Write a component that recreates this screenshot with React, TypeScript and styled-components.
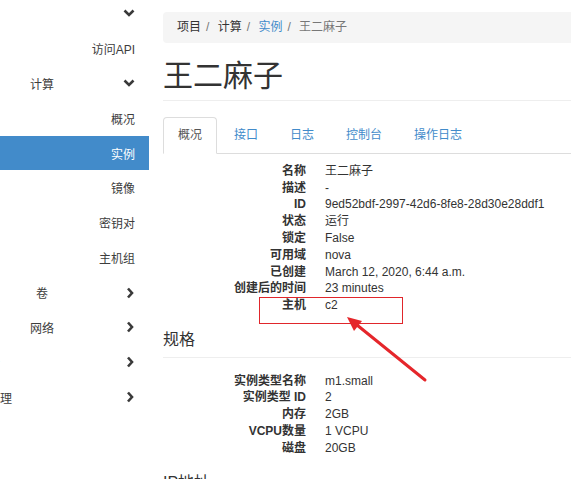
import React from 'react';
import styled, { createGlobalStyle } from 'styled-components';

const GlobalStyle = createGlobalStyle`
  html, body {
    margin: 0;
    padding: 0;
    background: #fff;
  }
  body {
    font-family: 'Liberation Sans', 'Noto Sans CJK SC', sans-serif;
    font-size: 12px;
    color: #333;
  }
`;

const Page = styled.div`
  position: relative;
  display: flex;
  width: 571px;
  height: 479px;
  overflow: hidden;
`;

const Sidebar = styled.nav`
  flex: 0 0 149px;
  display: flex;
  flex-direction: column;
  margin-top: -4px;
  overflow: hidden;
`;

const NavRow = styled.div<{ $active?: boolean; $sub?: boolean }>`
  flex: 0 0 34.9px;
  display: flex;
  align-items: center;
  justify-content: ${(p) => (p.$sub ? 'flex-end' : 'flex-start')};
  padding-right: 14px;
  background: ${(p) => (p.$active ? '#428bca' : 'transparent')};
  color: ${(p) => (p.$active ? '#fff' : '#3d3d3d')};
  white-space: nowrap;
`;

const GroupLabel = styled.span<{ $offset?: number }>`
  flex: 0 0 ${(p) => (p.$offset !== undefined ? 'auto' : '84px')};
  text-align: center;
  margin-left: ${(p) => p.$offset ?? 0}px;
`;

const Chevron = styled.svg`
  margin-left: auto;
  width: 12px;
  height: 12px;
  color: #3a3a3a;
`;

const Main = styled.main`
  flex: 0 0 460px;
  padding: 12px 0 0 14px;
`;

const Breadcrumb = styled.ol`
  display: flex;
  list-style: none;
  margin: 0;
  padding: 7px 14px;
  line-height: 17px;
  background: #f5f5f5;
  border-radius: 4px;

  li + li::before {
    content: '/\\00a0';
    padding: 0 5px;
    color: #777;
  }
`;

const Crumb = styled.li<{ $tone?: 'link' | 'active' }>`
  color: ${(p) => (p.$tone === 'link' ? '#428bca' : p.$tone === 'active' ? '#777' : '#333')};
`;

const Title = styled.h1`
  margin: 16px 0 0;
  padding-bottom: 8px;
  font-size: 30px;
  line-height: 33px;
  font-weight: normal;
  border-bottom: 1px solid #eee;
`;

const Tabs = styled.ul`
  display: flex;
  list-style: none;
  margin: 16px 0 0;
  padding: 0;
  border-bottom: 1px solid #ddd;
`;

const Tab = styled.li<{ $active?: boolean }>`
  margin: 0 2px -1px 0;
  padding: 9px 14px;
  line-height: 16.8px;
  border: 1px solid ${(p) => (p.$active ? '#ddd' : 'transparent')};
  border-bottom-color: transparent;
  border-radius: 4px 4px 0 0;
  background: ${(p) => (p.$active ? '#fff' : 'transparent')};
  color: ${(p) => (p.$active ? '#555' : '#428bca')};
`;

const DetailList = styled.dl<{ $gap?: number }>`
  display: grid;
  grid-template-columns: 143px 1fr;
  column-gap: 19px;
  margin: ${(p) => p.$gap ?? 9}px 0 0;
  line-height: 16.8px;

  dt {
    font-weight: bold;
    text-align: right;
    white-space: nowrap;
  }
  dd {
    margin: 0;
    white-space: nowrap;
  }
`;

const SectionTitle = styled.h4`
  margin: 17px 0 0;
  padding-bottom: 8px;
  font-size: 16px;
  line-height: 17.6px;
  font-weight: normal;
  border-bottom: 1px solid #eee;
`;

const Highlight = styled.div`
  position: absolute;
  left: 259px;
  top: 297px;
  width: 144px;
  height: 27px;
  box-sizing: border-box;
  border: 1px solid #e0262b;
`;

const Arrow = styled.svg`
  position: absolute;
  left: 340px;
  top: 308px;
  width: 95px;
  height: 80px;
`;

const ChevronDown = () => (
  <Chevron viewBox="0 0 12 12">
    <path d="M1.5 3.5 L6 8 L10.5 3.5" fill="none" stroke="currentColor" strokeWidth="2.6" />
  </Chevron>
);

const ChevronRight = () => (
  <Chevron viewBox="0 0 12 12">
    <path d="M5 1.5 L9 6 L5 10.5" fill="none" stroke="currentColor" strokeWidth="2.6" />
  </Chevron>
);

type NavItem = {
  label: string;
  sub?: boolean;
  active?: boolean;
  chevron?: 'down' | 'right';
  offset?: number;
};

const nav: NavItem[] = [
  { label: 'API 访问', chevron: 'down', offset: -120 },
  { label: '访问API', sub: true },
  { label: '计算', chevron: 'down' },
  { label: '概况', sub: true },
  { label: '实例', sub: true, active: true },
  { label: '镜像', sub: true },
  { label: '密钥对', sub: true },
  { label: '主机组', sub: true },
  { label: '卷', chevron: 'right' },
  { label: '网络', chevron: 'right' },
  { label: '对象存储', chevron: 'right', offset: -48 },
  { label: '身份管理', chevron: 'right', offset: -36 },
];

const overview: [string, string][] = [
  ['名称', '王二麻子'],
  ['描述', '-'],
  ['ID', '9ed52bdf-2997-42d6-8fe8-28d30e28ddf1'],
  ['状态', '运行'],
  ['锁定', 'False'],
  ['可用域', 'nova'],
  ['已创建', 'March 12, 2020, 6:44 a.m.'],
  ['创建后的时间', '23 minutes'],
  ['主机', 'c2'],
];

const specs: [string, string][] = [
  ['实例类型名称', 'm1.small'],
  ['实例类型 ID', '2'],
  ['内存', '2GB'],
  ['VCPU数量', '1 VCPU'],
  ['磁盘', '20GB'],
];

const tabs = ['概况', '接口', '日志', '控制台', '操作日志'];

const Details = ({ rows, gap }: { rows: [string, string][]; gap?: number }) => (
  <DetailList $gap={gap}>
    {rows.map(([k, v]) => (
      <React.Fragment key={k}>
        <dt>{k}</dt>
        <dd>{v}</dd>
      </React.Fragment>
    ))}
  </DetailList>
);

const App = () => (
  <>
    <GlobalStyle />
    <Page>
      <Sidebar>
        {nav.map((item) => (
          <NavRow key={item.label} $sub={item.sub} $active={item.active}>
            {item.sub ? item.label : <GroupLabel $offset={item.offset}>{item.label}</GroupLabel>}
            {item.chevron === 'down' && <ChevronDown />}
            {item.chevron === 'right' && <ChevronRight />}
          </NavRow>
        ))}
      </Sidebar>
      <Main>
        <Breadcrumb>
          <Crumb>项目</Crumb>
          <Crumb>计算</Crumb>
          <Crumb $tone="link">实例</Crumb>
          <Crumb $tone="active">王二麻子</Crumb>
        </Breadcrumb>
        <Title>王二麻子</Title>
        <Tabs>
          {tabs.map((t, i) => (
            <Tab key={t} $active={i === 0}>
              {t}
            </Tab>
          ))}
        </Tabs>
        <Details rows={overview} />
        <SectionTitle>规格</SectionTitle>
        <Details rows={specs} gap={15} />
        <SectionTitle>IP地址</SectionTitle>
      </Main>
      <Highlight />
      <Arrow viewBox="0 0 95 80">
        <line x1="17" y1="17" x2="85" y2="72" stroke="#e5262b" strokeWidth="3" strokeLinecap="round" />
        <polygon points="7,9 14,23 22,13" fill="#e5262b" />
      </Arrow>
    </Page>
  </>
);

export default App;
